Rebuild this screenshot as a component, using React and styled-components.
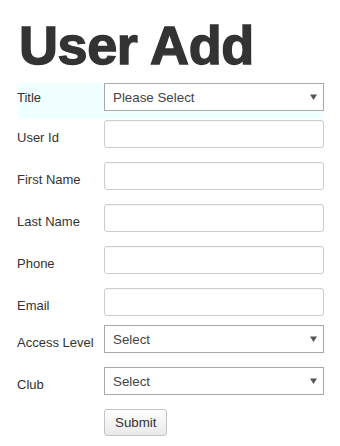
import React from "react";
import styled, { createGlobalStyle } from "styled-components";

const Global = createGlobalStyle`
  html, body { margin: 0; padding: 0; background: #fff; }
  body { font-family: "Liberation Sans", Arial, Helvetica, sans-serif; color: #333; }
  * { box-sizing: border-box; }
`;

const Page = styled.div`
  padding: 15px 0 0 17px;
`;

const Heading = styled.h1`
  margin: 0;
  font-family: "Liberation Sans", Arial, sans-serif;
  font-weight: 700;
  font-size: 54px;
  line-height: 60px;
  height: 68px;
  letter-spacing: -0.4px;
  color: #333;
  -webkit-text-stroke: 1.4px #333;
  padding-left: 2px;
`;

const Form = styled.form`
  display: flex;
  flex-direction: column;
  width: 307px;
`;

const Row = styled.div`
  display: grid;
  grid-template-columns: 87px 220px;
  align-items: center;
  background: ${(p) => (p.$highlight ? "#f0ffff" : "transparent")};
  padding-bottom: ${(p) => (p.$highlight ? "8px" : "0")};
  margin-bottom: ${(p) => p.$space}px;
`;

const Label = styled.label`
  font-size: 13px;
  line-height: 15px;
  color: #333;
  white-space: nowrap;
  padding-top: ${(p) => (p.$drop ? "6px" : "0")};
`;

const TextInput = styled.input`
  width: 220px;
  height: 28px;
  margin: 0;
  border: 1px solid #ccc;
  border-radius: 3px;
  background: #fff;
  font-family: inherit;
  font-size: 13px;
  padding: 0 8px;
  box-shadow: inset 0 1px 1px rgba(0, 0, 0, 0.04);
  outline: none;
`;

const SelectWrap = styled.div`
  position: relative;
  width: 220px;
  height: 28px;
`;

const Select = styled.select`
  appearance: none;
  -webkit-appearance: none;
  width: 100%;
  height: 100%;
  margin: 0;
  border: 1px solid #a9a9a9;
  border-radius: 0;
  background: #fff;
  color: #444;
  font-family: "Liberation Sans", Arial, sans-serif;
  font-size: 13.33px;
  padding: 0 20px 0 8px;
  outline: none;
`;

const Arrow = styled.svg`
  position: absolute;
  right: 7px;
  top: 11px;
  pointer-events: none;
`;

const Button = styled.button`
  grid-column: 2;
  justify-self: start;
  height: 27px;
  padding: 0 10px;
  border: 1px solid #c4c4c4;
  border-radius: 3px;
  background: linear-gradient(#fefefe, #e9e9e9);
  color: #333;
  font-family: "Liberation Sans", Arial, sans-serif;
  font-size: 13.33px;
  cursor: pointer;
`;

function Dropdown({ placeholder }) {
  return (
    <SelectWrap>
      <Select defaultValue="">
        <option value="">{placeholder}</option>
      </Select>
      <Arrow width="7" height="6" viewBox="0 0 7 6">
        <polygon points="0,0.5 7,0.5 3.5,6" fill="#555" />
      </Arrow>
    </SelectWrap>
  );
}

const inputs = [
  { label: "User Id", space: 14 },
  { label: "First Name", space: 14 },
  { label: "Last Name", space: 14 },
  { label: "Phone", space: 14 },
  { label: "Email", space: 9 },
];

export default function App() {
  return (
    <>
      <Global />
      <Page>
        <Heading>User Add</Heading>
        <Form onSubmit={(e) => e.preventDefault()}>
          <Row $highlight $space={1}>
            <Label>Title</Label>
            <Dropdown placeholder="Please Select" />
          </Row>
          {inputs.map((f) => (
            <Row key={f.label} $space={f.space}>
              <Label $drop>{f.label}</Label>
              <TextInput type="text" />
            </Row>
          ))}
          <Row $space={14}>
            <Label $drop>Access Level</Label>
            <Dropdown placeholder="Select" />
          </Row>
          <Row $space={14}>
            <Label $drop>Club</Label>
            <Dropdown placeholder="Select" />
          </Row>
          <Row $space={0}>
            <Button type="submit">Submit</Button>
          </Row>
        </Form>
      </Page>
    </>
  );
}
